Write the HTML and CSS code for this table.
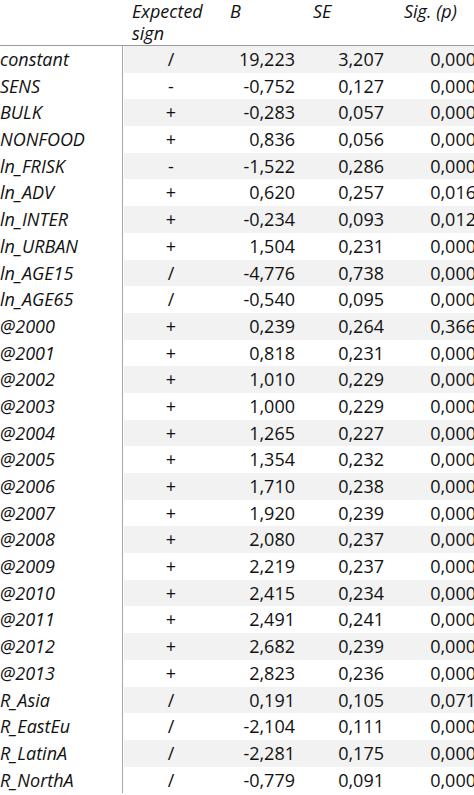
FILE: index.html
```html
<!DOCTYPE html>
<html lang="en">
<head>
<meta charset="utf-8">
<title>Regression results</title>
<link rel="stylesheet" href="styles.css">
</head>
<body>
<div class="table">
  <div class="head">
    <div class="h h-label"></div>
    <div class="h h-sign">Expected sign</div>
    <div class="h h-b">B</div>
    <div class="h h-se">SE</div>
    <div class="h h-sig">Sig. (p)</div>
  </div>
  <div class="row"><div class="lab">constant</div><div class="sg">/</div><div class="num">19,223</div><div class="num">3,207</div><div class="num">0,000</div></div>
  <div class="row"><div class="lab">SENS</div><div class="sg">-</div><div class="num">-0,752</div><div class="num">0,127</div><div class="num">0,000</div></div>
  <div class="row"><div class="lab">BULK</div><div class="sg">+</div><div class="num">-0,283</div><div class="num">0,057</div><div class="num">0,000</div></div>
  <div class="row"><div class="lab">NONFOOD</div><div class="sg">+</div><div class="num">0,836</div><div class="num">0,056</div><div class="num">0,000</div></div>
  <div class="row"><div class="lab">ln_FRISK</div><div class="sg">-</div><div class="num">-1,522</div><div class="num">0,286</div><div class="num">0,000</div></div>
  <div class="row"><div class="lab">ln_ADV</div><div class="sg">+</div><div class="num">0,620</div><div class="num">0,257</div><div class="num">0,016</div></div>
  <div class="row"><div class="lab">ln_INTER</div><div class="sg">+</div><div class="num">-0,234</div><div class="num">0,093</div><div class="num">0,012</div></div>
  <div class="row"><div class="lab">ln_URBAN</div><div class="sg">+</div><div class="num">1,504</div><div class="num">0,231</div><div class="num">0,000</div></div>
  <div class="row"><div class="lab">ln_AGE15</div><div class="sg">/</div><div class="num">-4,776</div><div class="num">0,738</div><div class="num">0,000</div></div>
  <div class="row"><div class="lab">ln_AGE65</div><div class="sg">/</div><div class="num">-0,540</div><div class="num">0,095</div><div class="num">0,000</div></div>
  <div class="row"><div class="lab">@2000</div><div class="sg">+</div><div class="num">0,239</div><div class="num">0,264</div><div class="num">0,366</div></div>
  <div class="row"><div class="lab">@2001</div><div class="sg">+</div><div class="num">0,818</div><div class="num">0,231</div><div class="num">0,000</div></div>
  <div class="row"><div class="lab">@2002</div><div class="sg">+</div><div class="num">1,010</div><div class="num">0,229</div><div class="num">0,000</div></div>
  <div class="row"><div class="lab">@2003</div><div class="sg">+</div><div class="num">1,000</div><div class="num">0,229</div><div class="num">0,000</div></div>
  <div class="row"><div class="lab">@2004</div><div class="sg">+</div><div class="num">1,265</div><div class="num">0,227</div><div class="num">0,000</div></div>
  <div class="row"><div class="lab">@2005</div><div class="sg">+</div><div class="num">1,354</div><div class="num">0,232</div><div class="num">0,000</div></div>
  <div class="row"><div class="lab">@2006</div><div class="sg">+</div><div class="num">1,710</div><div class="num">0,238</div><div class="num">0,000</div></div>
  <div class="row"><div class="lab">@2007</div><div class="sg">+</div><div class="num">1,920</div><div class="num">0,239</div><div class="num">0,000</div></div>
  <div class="row"><div class="lab">@2008</div><div class="sg">+</div><div class="num">2,080</div><div class="num">0,237</div><div class="num">0,000</div></div>
  <div class="row"><div class="lab">@2009</div><div class="sg">+</div><div class="num">2,219</div><div class="num">0,237</div><div class="num">0,000</div></div>
  <div class="row"><div class="lab">@2010</div><div class="sg">+</div><div class="num">2,415</div><div class="num">0,234</div><div class="num">0,000</div></div>
  <div class="row"><div class="lab">@2011</div><div class="sg">+</div><div class="num">2,491</div><div class="num">0,241</div><div class="num">0,000</div></div>
  <div class="row"><div class="lab">@2012</div><div class="sg">+</div><div class="num">2,682</div><div class="num">0,239</div><div class="num">0,000</div></div>
  <div class="row"><div class="lab">@2013</div><div class="sg">+</div><div class="num">2,823</div><div class="num">0,236</div><div class="num">0,000</div></div>
  <div class="row"><div class="lab">R_Asia</div><div class="sg">/</div><div class="num">0,191</div><div class="num">0,105</div><div class="num">0,071</div></div>
  <div class="row"><div class="lab">R_EastEu</div><div class="sg">/</div><div class="num">-2,104</div><div class="num">0,111</div><div class="num">0,000</div></div>
  <div class="row"><div class="lab">R_LatinA</div><div class="sg">/</div><div class="num">-2,281</div><div class="num">0,175</div><div class="num">0,000</div></div>
  <div class="row"><div class="lab">R_NorthA</div><div class="sg">/</div><div class="num">-0,779</div><div class="num">0,091</div><div class="num">0,000</div></div>
</div>
</body>
</html>
```

FILE: styles.css
```css
html, body {
  margin: 0;
  padding: 0;
  overflow: hidden;
  background: #ffffff;
}

body {
  width: 474px;
  height: 795px;
  font-family: "Open Sans", "DejaVu Sans", sans-serif;
  font-size: 18px;
  color: #111111;
}

.table {
  width: 478px;
}

.head,
.row {
  display: grid;
  grid-template-columns: 123px 95px 79px 89px 92px;
}

.head {
  box-sizing: border-box;
  height: 46px;
  border-bottom: 1px solid #9a9a9a;
  font-style: italic;
  line-height: 22px;
}

.h {
  white-space: normal;
}

.h-sign {
  padding-left: 9px;
  width: 80px;
}

.h-b {
  padding-left: 12px;
}

.h-se {
  padding-left: 16px;
}

.h-sig {
  padding-left: 18px;
  white-space: nowrap;
}

.row {
  box-sizing: border-box;
  height: 26.7px;
  line-height: 25.7px;
  padding-top: 0;
}

.row > div {
  box-sizing: border-box;
  padding-top: 1px;
  white-space: nowrap;
}

.lab {
  font-style: italic;
  padding-left: 0;
  border-right: 1px solid #a6a6a6;
  background: #ffffff;
}

.sg {
  text-align: center;
  border-left: 1px solid #ffffff;
}

.num {
  text-align: right;
  padding-right: 2px;
}

.row:nth-child(even) .sg,
.row:nth-child(even) .num {
  background-color: #f2f2f2;
}
```
